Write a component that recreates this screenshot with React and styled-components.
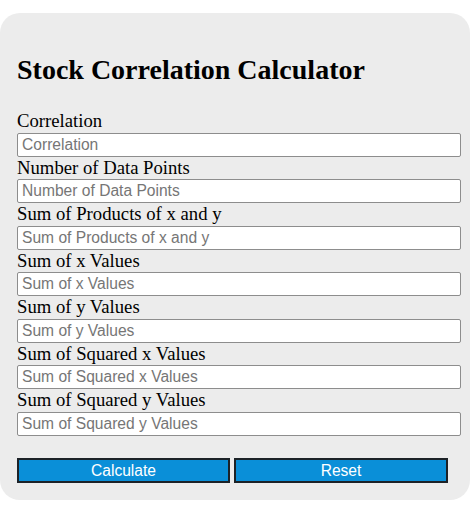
import React from "react";
import styled, { createGlobalStyle } from "styled-components";

const GlobalStyle = createGlobalStyle`
  html, body { margin: 0; padding: 0; background: #ffffff; }
  body { font-family: "Liberation Serif", "Times New Roman", serif; }
`;

const Card = styled.div`
  box-sizing: border-box;
  width: 470px;
  margin-top: 13px;
  padding: 17px 9px 17px 17px;
  background: #ececec;
  border-radius: 20px;
`;

const Title = styled.h1`
  margin: 24px 0 24px 0;
  font-family: "Liberation Serif", "Times New Roman", serif;
  font-size: 28px;
  line-height: 32px;
  font-weight: bold;
  color: #000;
`;

const Form = styled.form`
  display: flex;
  flex-direction: column;
`;

const Label = styled.label`
  display: block;
  font-family: "Liberation Serif", "Times New Roman", serif;
  font-size: 18.7px;
  line-height: 22.5px;
  color: #000;
`;

const Input = styled.input`
  box-sizing: border-box;
  width: 444px;
  height: 24px;
  margin: 0;
  padding: 0 4px;
  border: 1px solid #8d8d8d;
  border-radius: 2px;
  background: #fff;
  font-family: "Liberation Sans", Arial, sans-serif;
  font-size: 15.6px;
  color: #000;
  &::placeholder { color: #767676; }
`;

const Buttons = styled.div`
  display: flex;
  gap: 4px;
  margin-top: 22.5px;
`;

const Button = styled.button`
  box-sizing: border-box;
  width: ${(p) => p.$w}px;
  height: 25px;
  margin: 0;
  padding: 0;
  border: 2px solid #1c2227;
  background: #0a8fd8;
  color: #fff;
  font-family: "Liberation Sans", Arial, sans-serif;
  font-size: 15.6px;
  cursor: pointer;
`;

const fields = [
  "Correlation",
  "Number of Data Points",
  "Sum of Products of x and y",
  "Sum of x Values",
  "Sum of y Values",
  "Sum of Squared x Values",
  "Sum of Squared y Values",
];

export default function App() {
  return (
    <>
      <GlobalStyle />
      <Card>
        <Title>Stock Correlation Calculator</Title>
        <Form onSubmit={(e) => e.preventDefault()}>
          {fields.map((f) => (
            <React.Fragment key={f}>
              <Label>{f}</Label>
              <Input type="text" placeholder={f} />
            </React.Fragment>
          ))}
          <Buttons>
            <Button type="button" $w={213}>Calculate</Button>
            <Button type="reset" $w={214}>Reset</Button>
          </Buttons>
        </Form>
      </Card>
    </>
  );
}
